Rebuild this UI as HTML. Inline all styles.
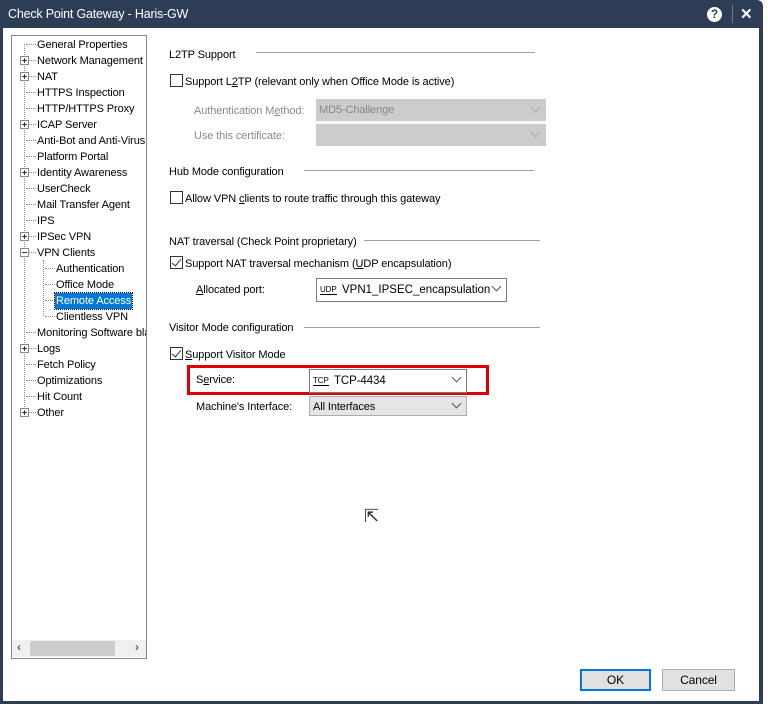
<!DOCTYPE html>
<html><head><style>
*{margin:0;padding:0;box-sizing:border-box}
body{width:768px;height:706px;background:#fff;position:relative;overflow:hidden;font-family:"Liberation Sans",sans-serif;font-size:11px;letter-spacing:-0.1px;color:#000}
.a{position:absolute;white-space:nowrap}
.t{margin-top:1px}
.frame{position:absolute;left:0;top:0;width:763px;height:704px;background:#2c3d55;border-radius:0 6px 0 0}
.body{position:absolute;left:3px;top:28px;width:756px;height:673px;background:#fff}
.title{left:8px;top:7px;color:#fff;font-size:12.5px;letter-spacing:-0.2px}
.tree{position:absolute;left:11px;top:35px;width:136px;height:624px;border:1px solid #828790;background:#fff;overflow:hidden}
.ti{position:absolute;font-size:11px;line-height:14px;white-space:nowrap;margin-top:1px}
.pb{position:absolute;width:9px;height:9px;border:1px solid #8a8a8a;background:#fff}
.pb:before{content:"";position:absolute;left:1px;top:3px;width:5px;height:1px;background:#333}
.pb.p:after{content:"";position:absolute;left:3px;top:1px;width:1px;height:5px;background:#333}
.dh{position:absolute;height:1px;border-top:1px dotted #888}
.dv{position:absolute;width:1px;border-left:1px dotted #888}
.hl{position:absolute;height:1px;background:#a0a0a0}
.cb{position:absolute;width:13px;height:13px;border:1px solid #333;background:#fff}
.ck:after{content:"";position:absolute;left:3px;top:0px;width:4px;height:8px;border:solid #333;border-width:0 1.5px 1.5px 0;transform:rotate(40deg)}
.combo{position:absolute;border:1px solid #7a7a7a;background:#fff;height:22px}
.combo.dis{background:#ccc;border-color:#ccc;color:#888}
.combo.gr{background:#e5e5e5;border-color:#adadad}
.chev{position:absolute;right:6px;top:4px;width:7px;height:7px;border:solid #555;border-width:0 1px 1px 0;transform:rotate(45deg)}
.dis .chev{border-color:#aaa}
.btn{position:absolute;height:22px;background:#e1e1e1;border:1px solid #adadad;text-align:center;line-height:20px;font-size:12px}
.gray{color:#8a8a8a}
u{text-decoration:underline}
</style></head><body>
<div class="frame"></div>
<div class="body"></div>
<div class="a title">Check Point Gateway - Haris-GW</div>
<div class="a" style="left:707px;top:7px;width:15px;height:15px;border-radius:50%;background:#fff;color:#2c3d55;font-weight:bold;font-size:12px;text-align:center;line-height:15px">?</div>
<div class="a" style="left:732px;top:5px;width:1px;height:18px;background:#6b7a8e"></div>
<div class="a" style="left:740px;top:5px;color:#fff;font-weight:bold;font-size:15px">✕</div>

<div class="tree">
<div class="dv" style="left:12px;top:8px;height:367px"></div>
<div class="dv" style="left:31px;top:224px;height:56px"></div>
<div class="dh" style="left:14px;top:8px;width:10px"></div><div class="ti" style="left:25px;top:1px">General Properties</div>
<div class="dh" style="left:14px;top:24px;width:10px"></div><div class="pb p" style="left:8px;top:20px"></div><div class="ti" style="left:25px;top:17px">Network Management</div>
<div class="dh" style="left:14px;top:40px;width:10px"></div><div class="pb p" style="left:8px;top:36px"></div><div class="ti" style="left:25px;top:33px">NAT</div>
<div class="dh" style="left:14px;top:56px;width:10px"></div><div class="ti" style="left:25px;top:49px">HTTPS Inspection</div>
<div class="dh" style="left:14px;top:72px;width:10px"></div><div class="ti" style="left:25px;top:65px">HTTP/HTTPS Proxy</div>
<div class="dh" style="left:14px;top:88px;width:10px"></div><div class="pb p" style="left:8px;top:84px"></div><div class="ti" style="left:25px;top:81px">ICAP Server</div>
<div class="dh" style="left:14px;top:104px;width:10px"></div><div class="ti" style="left:25px;top:97px">Anti-Bot and Anti-Virus</div>
<div class="dh" style="left:14px;top:120px;width:10px"></div><div class="ti" style="left:25px;top:113px">Platform Portal</div>
<div class="dh" style="left:14px;top:136px;width:10px"></div><div class="pb p" style="left:8px;top:132px"></div><div class="ti" style="left:25px;top:129px">Identity Awareness</div>
<div class="dh" style="left:14px;top:152px;width:10px"></div><div class="ti" style="left:25px;top:145px">UserCheck</div>
<div class="dh" style="left:14px;top:168px;width:10px"></div><div class="ti" style="left:25px;top:161px">Mail Transfer Agent</div>
<div class="dh" style="left:14px;top:184px;width:10px"></div><div class="ti" style="left:25px;top:177px">IPS</div>
<div class="dh" style="left:14px;top:200px;width:10px"></div><div class="pb p" style="left:8px;top:196px"></div><div class="ti" style="left:25px;top:193px">IPSec VPN</div>
<div class="dh" style="left:14px;top:216px;width:10px"></div><div class="pb" style="left:8px;top:212px"></div><div class="ti" style="left:25px;top:209px">VPN Clients</div>
<div class="dh" style="left:33px;top:232px;width:10px"></div><div class="ti" style="left:44px;top:225px">Authentication</div>
<div class="dh" style="left:33px;top:248px;width:10px"></div><div class="ti" style="left:44px;top:241px">Office Mode</div>
<div class="dh" style="left:33px;top:264px;width:10px"></div><div class="ti" style="left:43px;top:256px;background:#0078d7;color:#fff;padding:1px 1px;outline:1px dotted #000">Remote Access</div>
<div class="dh" style="left:33px;top:280px;width:10px"></div><div class="ti" style="left:44px;top:273px">Clientless VPN</div>
<div class="dh" style="left:14px;top:296px;width:10px"></div><div class="ti" style="left:25px;top:289px">Monitoring Software bla</div>
<div class="dh" style="left:14px;top:312px;width:10px"></div><div class="pb p" style="left:8px;top:308px"></div><div class="ti" style="left:25px;top:305px">Logs</div>
<div class="dh" style="left:14px;top:328px;width:10px"></div><div class="ti" style="left:25px;top:321px">Fetch Policy</div>
<div class="dh" style="left:14px;top:344px;width:10px"></div><div class="ti" style="left:25px;top:337px">Optimizations</div>
<div class="dh" style="left:14px;top:360px;width:10px"></div><div class="ti" style="left:25px;top:353px">Hit Count</div>
<div class="dh" style="left:14px;top:376px;width:10px"></div><div class="pb p" style="left:8px;top:372px"></div><div class="ti" style="left:25px;top:369px">Other</div>
<div class="a" style="left:0;top:604px;width:134px;height:17px;background:#f0f0f0"></div>
<div class="a" style="left:18px;top:605px;width:85px;height:15px;background:#cdcdcd"></div>
<div class="a" style="left:5px;top:604px;color:#606060;font-size:12px;font-weight:bold">‹</div>
<div class="a" style="left:123px;top:604px;color:#606060;font-size:12px;font-weight:bold">›</div>
</div>

<div class="a t" style="left:169px;top:48px">L2TP Support</div>
<div class="hl" style="left:256px;top:52px;width:279px"></div>
<div class="cb" style="left:170px;top:74px"></div>
<div class="a t" style="left:185px;top:75px">Support L<u>2</u>TP (relevant only when Office Mode is active)</div>
<div class="a gray t" style="left:194px;top:104px">Authentication M<u>e</u>thod:</div>
<div class="combo dis" style="left:316px;top:99px;width:230px;height:22px"><span class="a" style="left:2px;top:4px">MD5-Challenge</span><div class="chev"></div></div>
<div class="a gray t" style="left:194px;top:129px">Use this certificate:</div>
<div class="combo dis" style="left:316px;top:124px;width:230px;height:22px"><div class="chev"></div></div>

<div class="a t" style="left:169px;top:165px">Hub Mode configuration</div>
<div class="hl" style="left:304px;top:170px;width:230px"></div>
<div class="cb" style="left:170px;top:191px"></div>
<div class="a t" style="left:185px;top:192px">Allow VPN <u>c</u>lients to route traffic through this gateway</div>

<div class="a t" style="left:169px;top:235px">NAT traversal (Check Point proprietary)</div>
<div class="hl" style="left:364px;top:240px;width:176px"></div>
<div class="cb ck" style="left:170px;top:256px"></div>
<div class="a t" style="left:185px;top:257px">Support NAT traversal mechanism (<u>U</u>DP encapsulation)</div>
<div class="a t" style="left:196px;top:283px"><u>A</u>llocated port:</div>
<div class="combo" style="left:316px;top:278px;width:191px;height:24px"><span class="a" style="left:3px;top:6px;font-size:8px;border-bottom:1.5px solid #000;line-height:9px">UDP</span><span class="a" style="left:25px;top:5px;font-size:11.5px;letter-spacing:0px">VPN1_IPSEC_encapsulation</span><div class="chev"></div></div>

<div class="a t" style="left:169px;top:321px">Visitor Mode configuration</div>
<div class="hl" style="left:304px;top:327px;width:236px"></div>
<div class="cb ck" style="left:170px;top:347px"></div>
<div class="a t" style="left:185px;top:348px"><u>S</u>upport Visitor Mode</div>
<div class="a" style="left:187px;top:365px;width:302px;height:30px;border:3px solid #e00000"></div>
<div class="a t" style="left:196px;top:373px">S<u>e</u>rvice:</div>
<div class="combo" style="left:309px;top:369px;width:158px;height:24px"><span class="a" style="left:3px;top:6px;font-size:8px;border-bottom:1.5px solid #000;line-height:9px">TCP</span><span class="a" style="left:24px;top:5px;font-size:11.5px">TCP-4434</span><div class="chev"></div></div>
<div class="a t" style="left:196px;top:400px">Machine's Interface:</div>
<div class="combo gr" style="left:309px;top:396px;width:158px;height:20px"><span class="a" style="left:3px;top:4px">All Interfaces</span><div class="chev" style="top:3px"></div></div>

<div class="a" style="left:364px;top:506px;font-size:18px;color:#333">⇱</div>

<div class="btn" style="left:580px;top:669px;width:71px;border:2px solid #0078d7;line-height:18px">OK</div>
<div class="btn" style="left:662px;top:669px;width:73px">Cancel</div>
</body></html>
